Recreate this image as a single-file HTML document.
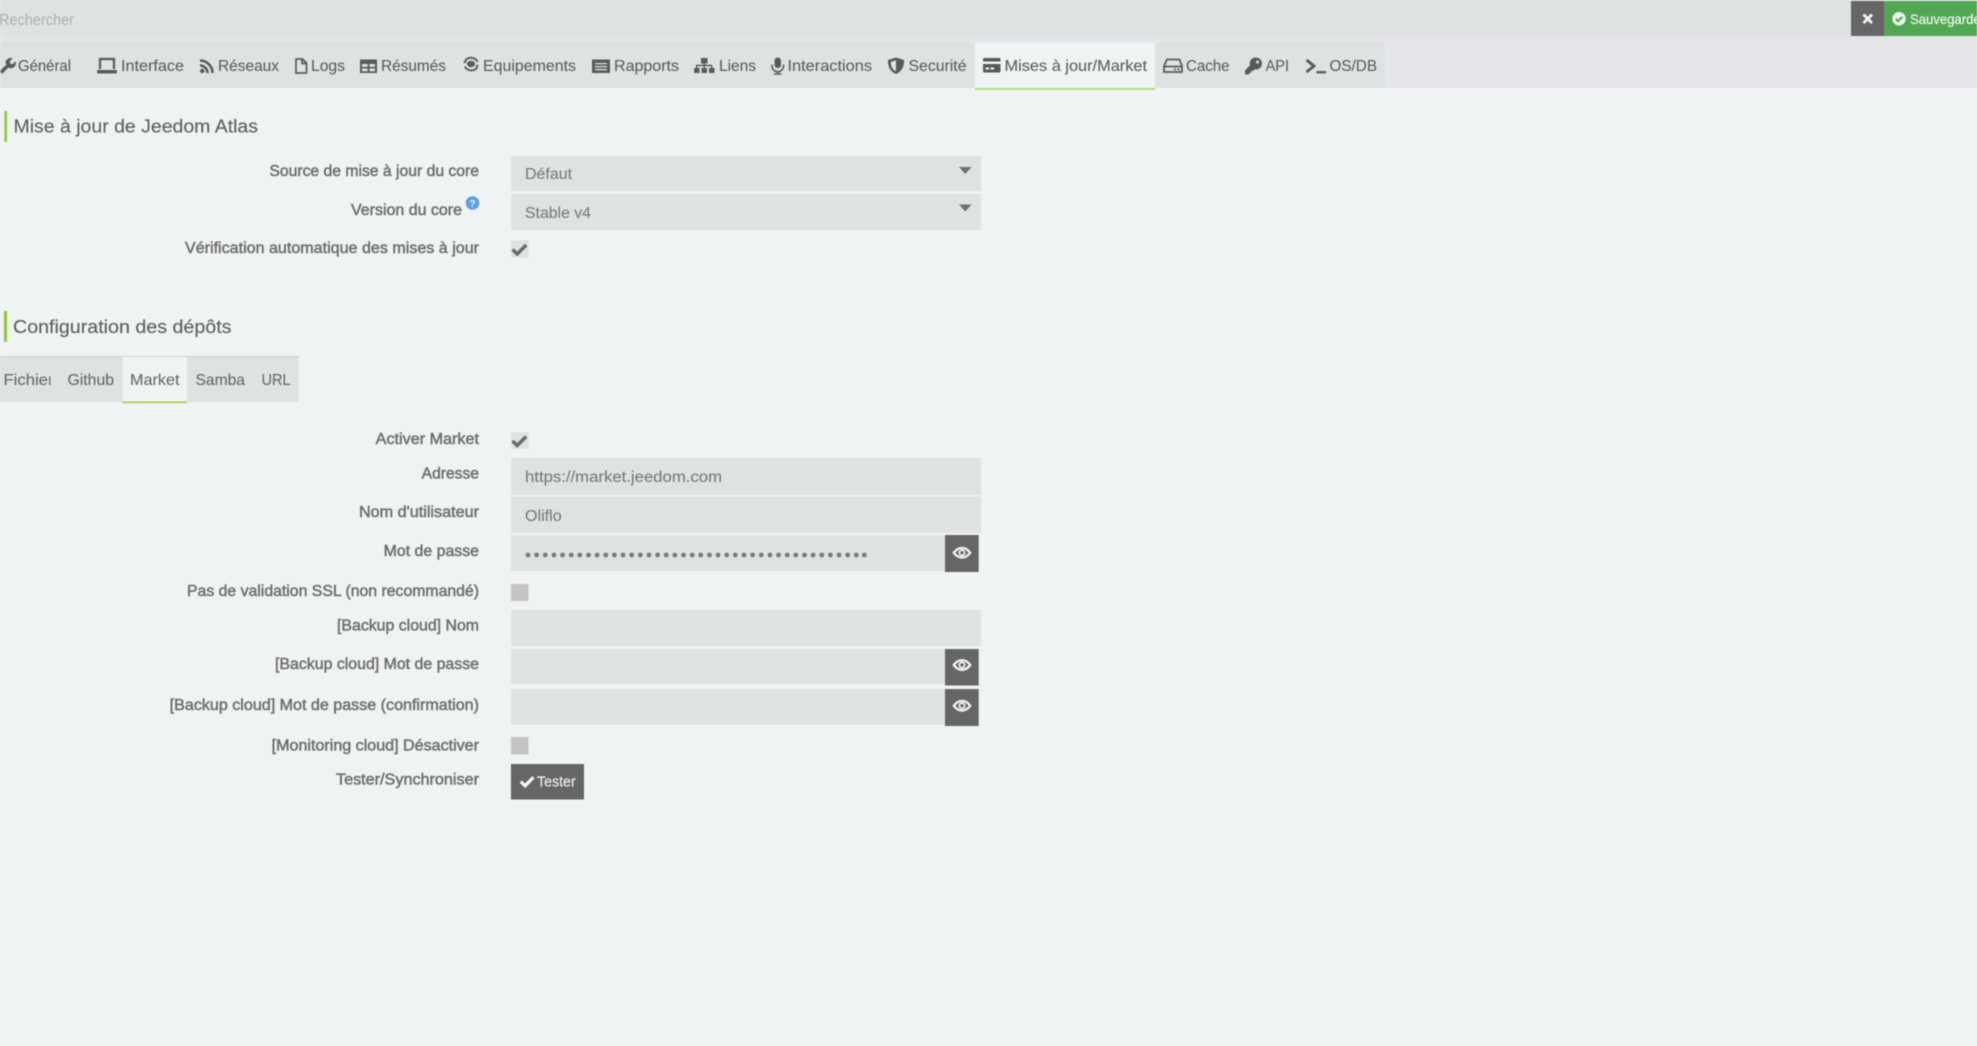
<!DOCTYPE html>
<html lang="fr">
<head>
<meta charset="utf-8">
<title>Configuration</title>
<style>
html,body{margin:0;padding:0;width:1977px;height:1046px;overflow:hidden;background:#eff3f4}
svg{display:block;position:absolute;left:0;top:0;filter:blur(.4px)}
text{font-family:"Liberation Sans",sans-serif}
.tab{font-size:16px;fill:#606060;stroke:#606060;stroke-width:.12px}
.lab{font-size:15.5px;fill:#707070;stroke:#707070;stroke-width:.5px}
.val{font-size:15.5px;fill:#7c7c7c;stroke:#7c7c7c;stroke-width:.12px}
.h{font-size:18.5px;fill:#626262;stroke:#626262;stroke-width:.15px}
.sub{font-size:16px;fill:#6a6a6a;stroke:#6a6a6a;stroke-width:.12px}
.i{fill:#5a5a5a}
.o{fill:none;stroke:#5a5a5a}
</style>
</head>
<body>
<svg width="1977" height="1046" viewBox="0 0 1977 1046" xmlns="http://www.w3.org/2000/svg">
<defs><clipPath id="fc"><rect x="0" y="360" width="50.5" height="40"/></clipPath></defs>
<rect width="1977" height="1046" fill="#eff3f4"/>

<!-- top bar -->
<rect x="0" y="0" width="1977" height="37" fill="#dfe2e2"/>
<text x="-1" y="25" font-size="15.5" fill="#adb0b0" textLength="75" lengthAdjust="spacingAndGlyphs">Rechercher</text>
<rect x="1851" y="1" width="33" height="35" fill="#666"/>
<path d="M1863.5 14.5l8.5 8.5M1872 14.5l-8.500 8.500" stroke="#f2f2f2" stroke-width="3" fill="none"/>
<rect x="1884" y="1" width="93" height="35" fill="#52a852"/>
<circle cx="1899" cy="18.7" r="6.7" fill="#eef2ee"/>
<path d="M1895.8 18.8l2.3 2.4 4.2-4.4" stroke="#52a852" stroke-width="1.9" fill="none"/>
<text x="1910" y="24" font-size="14" fill="#eef2ee" stroke="#eef2ee" stroke-width=".25" textLength="75" lengthAdjust="spacingAndGlyphs">Sauvegarder</text>

<!-- tab bar -->
<rect x="0" y="37" width="1977" height="51" fill="#e6e6ea"/>
<rect x="0" y="42" width="1385" height="46" fill="#dfe2e2"/>
<rect x="975" y="42" width="180" height="46" fill="#eff3f4"/>
<rect x="975" y="88" width="180" height="2" fill="#b5dc7d"/>

<text class="tab" x="18" y="71" textLength="53" lengthAdjust="spacingAndGlyphs">Général</text>
<text class="tab" x="121" y="71" textLength="63" lengthAdjust="spacingAndGlyphs">Interface</text>
<text class="tab" x="218" y="71" textLength="61" lengthAdjust="spacingAndGlyphs">Réseaux</text>
<text class="tab" x="311" y="71" textLength="34" lengthAdjust="spacingAndGlyphs">Logs</text>
<text class="tab" x="381" y="71" textLength="65" lengthAdjust="spacingAndGlyphs">Résumés</text>
<text class="tab" x="483" y="71" textLength="93" lengthAdjust="spacingAndGlyphs">Equipements</text>
<text class="tab" x="614" y="71" textLength="65" lengthAdjust="spacingAndGlyphs">Rapports</text>
<text class="tab" x="719" y="71" textLength="37" lengthAdjust="spacingAndGlyphs">Liens</text>
<text class="tab" x="787.5" y="71" textLength="84.5" lengthAdjust="spacingAndGlyphs">Interactions</text>
<text class="tab" x="908.5" y="71" textLength="58" lengthAdjust="spacingAndGlyphs">Securité</text>
<text class="tab" x="1004.5" y="71" textLength="142.5" lengthAdjust="spacingAndGlyphs">Mises à jour/Market</text>
<text class="tab" x="1186" y="71" textLength="43.5" lengthAdjust="spacingAndGlyphs">Cache</text>
<text class="tab" x="1265.6" y="71" textLength="23.4" lengthAdjust="spacingAndGlyphs">API</text>
<text class="tab" x="1329.5" y="71" textLength="47.5" lengthAdjust="spacingAndGlyphs">OS/DB</text>

<!-- tab icons -->
<!-- wrench -->
<path class="o" stroke-width="3.6" d="M1 72.500l7.500-7.500"/>
<path class="i" d="M5.500 63c0-3 2.600-5.400 5.800-5l1.500.4-3.100 3 .6 2.300 2.300.6 3-3 .3 1.400c.2 3.200-2.200 5.600-5.200 5.600l-1.600-.2z"/>
<!-- laptop -->
<path class="o" stroke-width="2.200" d="M100 69v-10h14v10"/>
<rect class="i" x="97" y="70" width="20" height="3.500" rx="1"/>
<!-- rss -->
<circle class="i" cx="202.200" cy="71" r="2.200"/>
<path class="o" stroke-width="2.600" d="M200 65.500a7.500 7.500 0 0 1 7.500 7.500M200 60.500a12.500 12.500 0 0 1 12.500 12.500"/>
<!-- file -->
<path class="o" stroke-width="1.700" d="M296 59h6.500l4 4V73H296zM302 59v4.500h4.500"/>
<!-- table -->
<path class="i" fill-rule="evenodd" d="M360 59.500h17v13.500h-17zM362 64v2.900h5.600V64zM369.400 64v2.900h5.600V64zM362 68.500v2.700h5.600v-2.700zM369.400 68.500v2.700h5.600v-2.700z"/>
<!-- equipment circle -->
<path class="o" stroke-width="1.900" d="M465 61a7.300 7.300 0 0 1 12.700 1M477.500 67a7.300 7.300 0 0 1-12.700-.5"/>
<ellipse class="i" cx="471" cy="64" rx="4" ry="3.200"/>
<path class="i" d="M463 63h4l-2-2.800zM479 65h-4l2 2.800z"/>
<!-- newspaper -->
<path class="i" fill-rule="evenodd" d="M592 59.500h18V73h-18zM595 63v1.300h12V63zM595 66v1.200h12V66zM595 68.900v1.300h12v-1.300z"/>
<!-- sitemap -->
<rect class="i" x="701" y="58" width="6.500" height="5.500"/>
<rect class="i" x="694" y="68" width="5.500" height="5"/>
<rect class="i" x="701.500" y="68" width="5.500" height="5"/>
<rect class="i" x="709" y="68" width="5.500" height="5"/>
<path class="o" stroke-width="1.400" d="M696.700 68v-2.500h15V68M704.200 63.500V68"/>
<!-- mic -->
<rect class="i" x="774.500" y="57.500" width="6.500" height="10.500" rx="3.200"/>
<path class="o" stroke-width="1.600" d="M772 64.500v1.500a5.700 5.700 0 0 0 11.500 0v-1.500M777.700 71.500v2.500M774 74h7.500"/>
<!-- shield -->
<path class="i" fill-rule="evenodd" d="M896 57.500l8 2.500c.3 6.500-2 11.500-8 14-6-2.500-8.300-7.500-8-14zM896 60.300l-5.200 1.700c0 4 1.400 7.400 5.200 9.400z"/>
<!-- card -->
<path class="i" fill-rule="evenodd" d="M984.500 58h14.500a1.500 1.500 0 0 1 1.500 1.500V61.500H983V59.500a1.500 1.500 0 0 1 1.500-1.500zM983 64h17.500v7a1.500 1.500 0 0 1-1.500 1.500H984.500A1.500 1.500 0 0 1 983 71zM985.500 67.500v2h3.500v-2zM990.500 67.500v2h3.500v-2z"/>
<!-- hdd -->
<path class="o" stroke-width="1.800" d="M1164 66l3-6.500h12.500l2.500 6.500v6h-18zM1164 66.500h18"/>
<circle class="i" cx="1178.500" cy="69.300" r="1.100"/><circle class="i" cx="1175" cy="69.300" r="1.100"/>
<!-- key -->
<path class="i" fill-rule="evenodd" d="M1256 57.500a6 6 0 0 1 0 12l-1.400-.2-1.500 1.700h-2v2H1249v1.500h-4v-4l5-5.200a6 6 0 0 1 6-7.800zM1257.500 60.500a1.500 1.500 0 1 0 0 3 1.500 1.500 0 0 0 0-3z"/>
<!-- terminal -->
<path class="o" stroke-width="2.900" d="M1306.500 60l7.500 6-7.500 6"/>
<rect class="i" x="1316.500" y="71" width="9.500" height="2.400"/>

<!-- section 1 -->
<rect x="4.500" y="111" width="2.500" height="31" fill="#8fc932"/>
<text class="h" x="13.500" y="132.500" textLength="244.500" lengthAdjust="spacingAndGlyphs">Mise à jour de Jeedom Atlas</text>

<text class="lab" x="269.400" y="176" textLength="209.600" lengthAdjust="spacingAndGlyphs">Source de mise à jour du core</text>
<text class="lab" x="351" y="215" textLength="111" lengthAdjust="spacingAndGlyphs">Version du core</text>
<circle cx="472.500" cy="203" r="6.800" fill="#5b9fe8"/>
<text x="472.500" y="207" font-size="10.500" font-weight="bold" fill="#eff3f4" text-anchor="middle">?</text>
<text class="lab" x="185" y="253" textLength="294" lengthAdjust="spacingAndGlyphs">Vérification automatique des mises à jour</text>

<rect x="511" y="156" width="470" height="35" fill="#dfe2e2"/>
<text class="val" x="525" y="179" textLength="47" lengthAdjust="spacingAndGlyphs">Défaut</text>
<path d="M959 167h12.500l-6.250 7z" fill="#707070"/>
<rect x="511" y="194" width="470" height="36" fill="#dfe2e2"/>
<text class="val" x="525" y="218" textLength="66" lengthAdjust="spacingAndGlyphs">Stable v4</text>
<path d="M959 204.500h12.500l-6.250 7z" fill="#707070"/>
<rect x="511" y="240.500" width="17.500" height="17" fill="#dfe2e2"/>
<path d="M512.500 249.500l4.700 4.500 9-9" stroke="#6a6a6a" stroke-width="3.400" fill="none"/>

<!-- section 2 -->
<rect x="4" y="311" width="3" height="31" fill="#8fc932"/>
<text class="h" x="13" y="333" textLength="218.500" lengthAdjust="spacingAndGlyphs">Configuration des dépôts</text>

<rect x="0" y="356" width="298.500" height="46" fill="#dfe2e2"/>
<rect x="0" y="356" width="298.500" height="1.500" fill="#d2d5d5"/>
<rect x="122.500" y="357" width="64.500" height="45" fill="#eff3f4"/>
<rect x="122.500" y="401.500" width="64.500" height="1.500" fill="#9ccc3f"/>
<text class="sub" x="3.500" y="385" textLength="50" lengthAdjust="spacingAndGlyphs" clip-path="url(#fc)">Fichier</text>
<text class="sub" x="67.500" y="385" textLength="46.500" lengthAdjust="spacingAndGlyphs">Github</text>
<text class="sub" x="130" y="385" textLength="49.500" lengthAdjust="spacingAndGlyphs">Market</text>
<text class="sub" x="195.500" y="385" textLength="49.500" lengthAdjust="spacingAndGlyphs">Samba</text>
<text class="sub" x="261.500" y="385" textLength="29" lengthAdjust="spacingAndGlyphs">URL</text>

<!-- form labels -->
<text class="lab" x="375.700" y="444" textLength="103.300" lengthAdjust="spacingAndGlyphs">Activer Market</text>
<text class="lab" x="421.700" y="478.700" textLength="57.300" lengthAdjust="spacingAndGlyphs">Adresse</text>
<text class="lab" x="359" y="517" textLength="120" lengthAdjust="spacingAndGlyphs">Nom d'utilisateur</text>
<text class="lab" x="383.700" y="556" textLength="95.300" lengthAdjust="spacingAndGlyphs">Mot de passe</text>
<text class="lab" x="187" y="596" textLength="292" lengthAdjust="spacingAndGlyphs">Pas de validation SSL (non recommandé)</text>
<text class="lab" x="337" y="630.700" textLength="142" lengthAdjust="spacingAndGlyphs">[Backup cloud] Nom</text>
<text class="lab" x="275" y="669" textLength="204" lengthAdjust="spacingAndGlyphs">[Backup cloud] Mot de passe</text>
<text class="lab" x="169.700" y="710" textLength="309.300" lengthAdjust="spacingAndGlyphs">[Backup cloud] Mot de passe (confirmation)</text>
<text class="lab" x="271.700" y="750.700" textLength="207.300" lengthAdjust="spacingAndGlyphs">[Monitoring cloud] Désactiver</text>
<text class="lab" x="336" y="784.700" textLength="143" lengthAdjust="spacingAndGlyphs">Tester/Synchroniser</text>

<!-- form controls -->
<rect x="511" y="432" width="17.500" height="17" fill="#dfe2e2"/>
<path d="M512.500 441l4.700 4.500 9-9" stroke="#6a6a6a" stroke-width="3.400" fill="none"/>

<rect x="511" y="458" width="470" height="37" fill="#dfe2e2"/>
<text class="val" x="525" y="482" textLength="197" lengthAdjust="spacingAndGlyphs">https://market.jeedom.com</text>
<rect x="511" y="496.500" width="470" height="36.500" fill="#dfe2e2"/>
<text class="val" x="525" y="521" textLength="36.700" lengthAdjust="spacingAndGlyphs">Oliflo</text>
<rect x="511" y="535" width="434" height="36" fill="#dfe2e2"/>
<g fill="#7a7a7a">
<circle cx="528" cy="555" r="2.400"/><circle cx="536.640" cy="555" r="2.400"/><circle cx="545.280" cy="555" r="2.400"/><circle cx="553.920" cy="555" r="2.400"/><circle cx="562.560" cy="555" r="2.400"/><circle cx="571.200" cy="555" r="2.400"/><circle cx="579.840" cy="555" r="2.400"/><circle cx="588.480" cy="555" r="2.400"/><circle cx="597.120" cy="555" r="2.400"/><circle cx="605.760" cy="555" r="2.400"/>
<circle cx="614.400" cy="555" r="2.400"/><circle cx="623.040" cy="555" r="2.400"/><circle cx="631.680" cy="555" r="2.400"/><circle cx="640.320" cy="555" r="2.400"/><circle cx="648.960" cy="555" r="2.400"/><circle cx="657.600" cy="555" r="2.400"/><circle cx="666.240" cy="555" r="2.400"/><circle cx="674.880" cy="555" r="2.400"/><circle cx="683.520" cy="555" r="2.400"/><circle cx="692.160" cy="555" r="2.400"/>
<circle cx="700.800" cy="555" r="2.400"/><circle cx="709.440" cy="555" r="2.400"/><circle cx="718.080" cy="555" r="2.400"/><circle cx="726.720" cy="555" r="2.400"/><circle cx="735.360" cy="555" r="2.400"/><circle cx="744" cy="555" r="2.400"/><circle cx="752.640" cy="555" r="2.400"/><circle cx="761.280" cy="555" r="2.400"/><circle cx="769.920" cy="555" r="2.400"/><circle cx="778.560" cy="555" r="2.400"/>
<circle cx="787.200" cy="555" r="2.400"/><circle cx="795.840" cy="555" r="2.400"/><circle cx="804.480" cy="555" r="2.400"/><circle cx="813.120" cy="555" r="2.400"/><circle cx="821.760" cy="555" r="2.400"/><circle cx="830.400" cy="555" r="2.400"/><circle cx="839.040" cy="555" r="2.400"/><circle cx="847.680" cy="555" r="2.400"/><circle cx="856.320" cy="555" r="2.400"/><circle cx="864.300" cy="555" r="2.400"/>
</g>
<rect x="945" y="535" width="33.700" height="37" fill="#666"/>
<rect x="511" y="584" width="17.500" height="17" fill="#c4c4c4"/>
<rect x="511" y="610" width="470" height="36" fill="#dfe2e2"/>
<rect x="511" y="649" width="434" height="35" fill="#dfe2e2"/>
<rect x="945" y="649" width="33.700" height="36.500" fill="#666"/>
<rect x="511" y="689" width="434" height="36" fill="#dfe2e2"/>
<rect x="945" y="689" width="33.700" height="37" fill="#666"/>
<rect x="511" y="737" width="17.500" height="17.500" fill="#c4c4c4"/>

<!-- eyes -->
<g fill="none" stroke="#f0f0f0">
<path stroke-width="2.400" d="M953.800 552.700c4.600-6.400 11.800-6.400 16.400 0-4.600 6.400-11.800 6.400-16.400 0z"/><circle cx="962" cy="552.700" r="2.600" stroke-width="1.800"/>
<path stroke-width="2.400" d="M953.800 665c4.600-6.400 11.800-6.400 16.400 0-4.600 6.400-11.800 6.400-16.400 0z"/><circle cx="962" cy="665" r="2.600" stroke-width="1.800"/>
<path stroke-width="2.400" d="M953.800 705.700c4.600-6.400 11.800-6.400 16.400 0-4.600 6.400-11.800 6.400-16.400 0z"/><circle cx="962" cy="705.700" r="2.600" stroke-width="1.800"/>
</g>

<!-- tester -->
<rect x="511" y="764" width="73" height="35.500" fill="#666"/>
<path d="M520.800 781.500l4.300 4.300 8.300-8.500" stroke="#f6f6f6" stroke-width="3.300" fill="none"/>
<text x="537" y="786.500" font-size="15" fill="#eee" stroke="#eee" stroke-width=".15" textLength="38.700" lengthAdjust="spacingAndGlyphs">Tester</text>
</svg>
</body>
</html>
